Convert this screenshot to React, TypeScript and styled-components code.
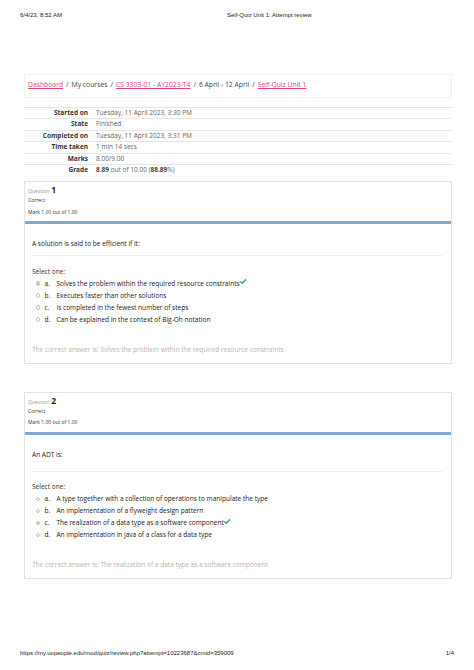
import * as React from 'react';
import styled, { createGlobalStyle } from 'styled-components';

const GlobalStyle = createGlobalStyle`
  html, body {
    margin: 0;
    padding: 0;
    background: #ffffff;
  }
  * {
    box-sizing: border-box;
  }
`;

const Page = styled.div`
  width: 474px;
  height: 670px;
  display: flex;
  flex-direction: column;
  background: #ffffff;
  overflow: hidden;
`;

const PrintBar = styled.div`
  display: grid;
  grid-template-columns: 207px 1fr auto;
  padding: 0 20px;
  font-family: 'Liberation Sans', Arial, sans-serif;
  font-size: 6px;
  line-height: 8px;
  color: #222;
`;

const PrintHeader = styled(PrintBar)`
  padding-top: 11px;
`;

const PrintFooter = styled(PrintBar)`
  margin-top: auto;
  padding-bottom: 13px;
  grid-template-columns: 1fr auto;
`;

const Main = styled.div`
  width: 428px;
  margin: 55px 0 0 24px;
  font-family: 'Open Sans', 'Noto Sans', sans-serif;
  color: #333;
`;

const Breadcrumb = styled.nav`
  border: 1px solid #efefef;
  padding: 5px 3px 8px;
  font-size: 6.8px;
  line-height: 9px;
  color: #444;
`;

const Crumb = styled.a`
  color: #e4407e;
  text-decoration: underline;
`;

const Sep = styled.span`
  margin: 0 3px;
`;

const Summary = styled.div`
  margin-top: 9px;
`;

const SummaryRow = styled.div`
  display: grid;
  grid-template-columns: 64px 1fr;
  column-gap: 8px;
  border-top: 1px solid #e6e6e6;
  font-size: 6.5px;
  line-height: 10.4px;
`;

const Label = styled.div`
  font-weight: 700;
  color: #333;
  text-align: right;
`;

const Value = styled.div`
  color: #666;

  b {
    color: #444;
  }
`;

const QuestionCard = styled.section<{ $gap: number }>`
  margin-top: ${({ $gap }) => $gap}px;
  border: 1px solid #e3e3e3;
`;

const Info = styled.div`
  padding: 3px 3px 3px;
  font-size: 5px;
  color: #333;
`;

const QNo = styled.div`
  display: flex;
  align-items: baseline;
  height: 10px;
  line-height: 10px;
  color: #999;

  strong {
    font-size: 8.5px;
    line-height: 10px;
    color: #222;
    margin-left: 2px;
  }
`;

const InfoLine = styled.div`
  line-height: 11.5px;
`;

const StateBar = styled.div`
  height: 3px;
  background: #7fa8d3;
`;

const Content = styled.div`
  padding: 15px 8px 9px 7px;
  font-size: 6.55px;
  color: #222;
`;

const QText = styled.div<{ $extra: number }>`
  line-height: 9px;
  padding-bottom: ${({ $extra }) => 7 + $extra}px;
  border-bottom: 1px solid #efefef;
`;

const Prompt = styled.div`
  margin-top: 10.5px;
  line-height: 9px;
  color: #333;
`;

const Options = styled.div`
  margin-top: 1.5px;
`;

const Option = styled.div`
  display: flex;
  align-items: center;
  height: 12px;
  padding-left: 4px;
`;

const Radio = styled.span<{ $checked: boolean }>`
  width: 4.4px;
  height: 4.4px;
  border-radius: 50%;
  border: 0.6px solid #c4c4c4;
  background: ${({ $checked }) => ($checked ? '#d0d0d0' : '#ffffff')};
  margin-right: 4px;
  flex-shrink: 0;
`;

const Letter = styled.span`
  width: 12px;
  flex-shrink: 0;
`;

const Tick = styled.svg`
  width: 6px;
  height: 5px;
  margin-left: 0.5px;
  margin-top: -3px;
`;

const Answer = styled.div`
  margin-top: 19.5px;
  line-height: 9px;
  color: #b5b5b5;
`;

type Q = {
  no: number;
  text: string;
  extra: number;
  gap: number;
  options: string[];
  correct: number;
};

const questions: Q[] = [
  {
    no: 1,
    text: 'A solution is said to be efficient if it:',
    extra: 0,
    gap: 6,
    options: [
      'Solves the problem within the required resource constraints',
      'Executes faster than other solutions',
      'Is completed in the fewest number of steps',
      'Can be explained in the context of Big-Oh notation',
    ],
    correct: 0,
  },
  {
    no: 2,
    text: 'An ADT is:',
    extra: 5,
    gap: 28,
    options: [
      'A type together with a collection of operations to manipulate the type',
      'An implementation of a flyweight design pattern',
      'The realization of a data type as a software component',
      'An implementation in java of a class for a data type',
    ],
    correct: 2,
  },
];

const letters = ['a.', 'b.', 'c.', 'd.'];

const summary: [string, React.ReactNode][] = [
  ['Started on', 'Tuesday, 11 April 2023, 3:30 PM'],
  ['State', 'Finished'],
  ['Completed on', 'Tuesday, 11 April 2023, 3:31 PM'],
  ['Time taken', '1 min 14 secs'],
  ['Marks', '8.00/9.00'],
  [
    'Grade',
    <>
      <b>8.89</b> out of 10.00 (<b>88.89</b>%)
    </>,
  ],
];

const Check = () => (
  <Tick viewBox="0 0 12 10">
    <path d="M1 5.2 L4.4 8.6 L11 1.6" fill="none" stroke="#2ea84a" strokeWidth="2.6" strokeLinecap="round" strokeLinejoin="round" />
  </Tick>
);

const App: React.FC = () => {
  return (
    <Page>
      <GlobalStyle />
      <PrintHeader>
        <span>6/4/23, 8:52 AM</span>
        <span>Self-Quiz Unit 1: Attempt review</span>
      </PrintHeader>

      <Main>
        <Breadcrumb>
          <Crumb>Dashboard</Crumb>
          <Sep>/</Sep>My courses<Sep>/</Sep>
          <Crumb>CS 3303-01 - AY2023-T4</Crumb>
          <Sep>/</Sep>6 April - 12 April<Sep>/</Sep>
          <Crumb>Self-Quiz Unit 1</Crumb>
        </Breadcrumb>

        <Summary>
          {summary.map(([label, value]) => (
            <SummaryRow key={label}>
              <Label>{label}</Label>
              <Value>{value}</Value>
            </SummaryRow>
          ))}
        </Summary>

        {questions.map((q) => (
          <QuestionCard key={q.no} $gap={q.gap}>
            <Info>
              <QNo>
                Question <strong>{q.no}</strong>
              </QNo>
              <InfoLine>Correct</InfoLine>
              <InfoLine>Mark 1.00 out of 1.00</InfoLine>
            </Info>
            <StateBar />
            <Content>
              <QText $extra={q.extra}>{q.text}</QText>
              <Prompt>Select one:</Prompt>
              <Options>
                {q.options.map((opt, i) => (
                  <Option key={opt}>
                    <Radio $checked={i === q.correct} />
                    <Letter>{letters[i]}</Letter>
                    <span>{opt}</span>
                    {i === q.correct && <Check />}
                  </Option>
                ))}
              </Options>
              <Answer>The correct answer is: {q.options[q.correct]}</Answer>
            </Content>
          </QuestionCard>
        ))}
      </Main>

      <PrintFooter>
        <span>https://my.uopeople.edu/mod/quiz/review.php?attempt=10223687&amp;cmid=359009</span>
        <span>1/4</span>
      </PrintFooter>
    </Page>
  );
};

export default App;
